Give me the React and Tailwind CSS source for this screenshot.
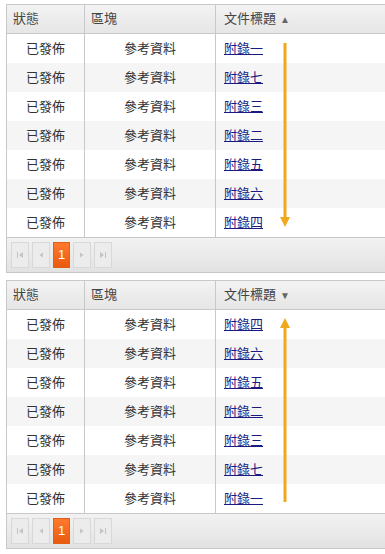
import React from "react";

const FONT = { fontFamily: '"Liberation Sans", "Noto Sans CJK TC", sans-serif' };

function Arrow({ dir }) {
  return (
    <svg className="absolute pointer-events-none" style={{ left: 271, top: dir === "down" ? 38 : 37 }} width="14" height="186" viewBox="0 0 14 186">
      {dir === "down" ? (
        <>
          <rect x="5.5" y="0" width="3" height="176" fill="#f0a81e" />
          <polygon points="2,174 12,174 7,184" fill="#f0a81e" />
        </>
      ) : (
        <>
          <polygon points="2,10 12,10 7,0" fill="#f0a81e" />
          <rect x="5.5" y="8" width="3" height="176" fill="#f0a81e" />
        </>
      )}
    </svg>
  );
}

function PagerBtn({ children, active }) {
  if (active)
    return (
      <div className="w-[17px] h-[26px] flex items-center justify-center bg-gradient-to-b from-[#ff7a2e] to-[#e85a0c] border border-[#e0601a] text-white text-[13px]">
        {children}
      </div>
    );
  return (
    <div className="w-[18px] h-[26px] flex items-center justify-center border border-[#d8d8d8] bg-[#ececec] text-[#c0c0c0]">
      {children}
    </div>
  );
}

function Grid({ rows, dir }) {
  return (
    <div className="relative w-[400px] border border-[#c8c8c8] bg-white" style={FONT}>
      <div className="flex h-[29px] border-b border-[#c8c8c8] bg-gradient-to-b from-[#f3f3f3] to-[#e6e6e6] text-[13px] text-[#444]">
        <div className="w-[78px] border-r border-[#c8c8c8] flex items-center pl-[6px]">狀態</div>
        <div className="w-[131px] border-r border-[#c8c8c8] flex items-center pl-[6px]">區塊</div>
        <div className="flex-1 flex items-center pl-[8px]">
          文件標題
          <span className="ml-[4px] text-[10px] text-[#666]">{dir === "down" ? "▲" : "▼"}</span>
        </div>
      </div>
      {rows.map((r, i) => (
        <div key={i} className={`flex h-[29px] text-[13px] text-[#333] ${i % 2 ? "bg-[#f5f5f5]" : "bg-white"}`}>
          <div className="w-[78px] border-r border-[#c8c8c8] flex items-center justify-center">已發佈</div>
          <div className="w-[131px] border-r border-[#c8c8c8] flex items-center justify-center">參考資料</div>
          <div className="flex-1 flex items-center pl-[8px]">
            <span className="underline text-[#1a1a80]">{r}</span>
          </div>
        </div>
      ))}
      <div className="flex items-center gap-[3px] h-[35px] border-t border-[#c8c8c8] bg-gradient-to-b from-[#f2f2f2] to-[#e2e2e2] pl-[4px]">
        <PagerBtn>
          <svg width="8" height="8" viewBox="0 0 8 8"><rect x="1" y="1" width="1" height="6" fill="#c4c4c4" /><polygon points="7,1 7,7 3,4" fill="#c4c4c4" /></svg>
        </PagerBtn>
        <PagerBtn>
          <svg width="8" height="8" viewBox="0 0 8 8"><polygon points="6,1.5 6,6.5 2.5,4" fill="#c4c4c4" /></svg>
        </PagerBtn>
        <PagerBtn active>1</PagerBtn>
        <PagerBtn>
          <svg width="8" height="8" viewBox="0 0 8 8"><polygon points="2,1.5 2,6.5 5.5,4" fill="#c4c4c4" /></svg>
        </PagerBtn>
        <PagerBtn>
          <svg width="8" height="8" viewBox="0 0 8 8"><polygon points="1,1 1,7 5,4" fill="#c4c4c4" /><rect x="6" y="1" width="1" height="6" fill="#c4c4c4" /></svg>
        </PagerBtn>
      </div>
      <Arrow dir={dir} />
    </div>
  );
}

export default function App() {
  return (
    <div className="w-[385px] h-[554px] overflow-hidden bg-white pl-[6px] pt-[4px] flex flex-col gap-[7px]">
      <Grid dir="down" rows={["附錄一", "附錄七", "附錄三", "附錄二", "附錄五", "附錄六", "附錄四"]} />
      <Grid dir="up" rows={["附錄四", "附錄六", "附錄五", "附錄二", "附錄三", "附錄七", "附錄一"]} />
    </div>
  );
}
